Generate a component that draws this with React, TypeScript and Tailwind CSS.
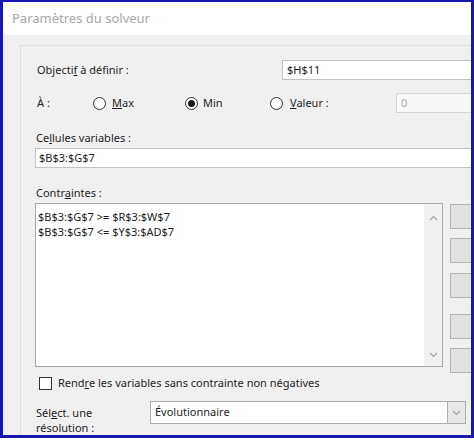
import React from "react";

const font = { fontFamily: '"Noto Sans", "Open Sans", sans-serif' };

function Radio({ checked }: { checked?: boolean }) {
  return (
    <span className="w-[13px] h-[13px] rounded-full border border-[#333] bg-white flex items-center justify-center shrink-0">
      {checked && <span className="w-[7px] h-[7px] rounded-full bg-[#1a1a1a]" />}
    </span>
  );
}

function Chevron({ up }: { up?: boolean }) {
  return (
    <svg width="9" height="6" viewBox="0 0 9 6" className="block">
      <path d={up ? "M1 5 L4.5 1.5 L8 5" : "M1 1 L4.5 4.5 L8 1"} fill="none" stroke="#a0a0a0" strokeWidth="1.1" />
    </svg>
  );
}

export default function App() {
  return (
    <div className="w-[474px] h-[441px] bg-white overflow-hidden text-[11px] text-[#1e1e1e]" style={font}>
      <div className="h-[438px] border-[#1818b0] border-l-[3px] border-t-[2px] border-r-[3px] border-b-[3px] flex flex-col overflow-hidden">
        <div className="h-[33px] shrink-0 bg-white flex items-center pl-[9px] text-[13px] text-[#a8a8a8]">
          Paramètres du solveur
        </div>
        <div className="flex-1 bg-[#f1eff0] pl-[17px] pt-[10px] overflow-hidden">
          <div className="h-full w-[480px] bg-[#f0f0f0] border-l border-t border-[#dedede] flex flex-col">
            {/* Objectif */}
            <div className="flex items-center h-[20px] mt-[14px]">
              <div className="w-[261px] pl-[16px] shrink-0">
                Objecti<span className="underline">f</span> à définir :
              </div>
              <div className="w-[220px] h-[20px] bg-white border border-[#c2c2c2] flex items-center pl-[4px] shrink-0">
                $H$11
              </div>
            </div>
            {/* À */}
            <div className="flex items-center h-[20px] mt-[13px]">
              <div className="w-[72px] pl-[16px] shrink-0">À :</div>
              <div className="w-[92px] flex items-center gap-[6px] shrink-0">
                <Radio />
                <span>
                  <span className="underline">M</span>ax
                </span>
              </div>
              <div className="w-[85px] flex items-center gap-[5px] shrink-0">
                <Radio checked />
                <span>Min</span>
              </div>
              <div className="w-[126px] flex items-center gap-[7px] shrink-0">
                <Radio />
                <span>
                  <span className="underline">V</span>aleur :
                </span>
              </div>
              <div className="w-[120px] h-[20px] bg-[#f8f8f8] border border-[#d4d4d4] flex items-center pl-[4px] text-[#a8a8a8] shrink-0">
                0
              </div>
            </div>
            {/* Cellules variables */}
            <div className="h-[16px] leading-[16px] mt-[17px] pl-[15px]">
              Ce<span className="underline">l</span>lules variables :
            </div>
            <div className="h-[21px] mt-[2px] ml-[14px] w-[460px] bg-white border border-[#c2c2c2] flex items-center pl-[3px]">
              $B$3:$G$7
            </div>
            {/* Contraintes */}
            <div className="h-[16px] leading-[16px] mt-[17px] pl-[15px]">
              Contr<span className="underline">a</span>intes :
            </div>
            <div className="flex items-start h-[164px] mt-[2px] ml-[14px]">
              <div className="w-[408px] h-[164px] bg-white border border-[#a8a8a8] flex shrink-0">
                <div className="flex-1 pl-[2px] pt-[5px] leading-[15px]">
                  <div>$B$3:$G$7 &gt;= $R$3:$W$7</div>
                  <div>$B$3:$G$7 &lt;= $Y$3:$AD$7</div>
                </div>
                <div className="w-[18px] bg-[#f0f0f0] flex flex-col justify-between items-center pt-[11px] pb-[8px]">
                  <Chevron up />
                  <Chevron />
                </div>
              </div>
              <div className="flex flex-col ml-[7px] shrink-0">
                <div className="w-[40px] h-[25px] mt-[1px] bg-[#e1e1e1] border border-[#b4b4b4]" />
                <div className="w-[40px] h-[25px] mt-[9px] bg-[#e1e1e1] border border-[#b4b4b4]" />
                <div className="w-[40px] h-[25px] mt-[10px] bg-[#e1e1e1] border border-[#b4b4b4]" />
                <div className="w-[40px] h-[25px] mt-[16px] bg-[#e1e1e1] border border-[#b4b4b4]" />
                <div className="w-[40px] h-[25px] mt-[9px] bg-[#e1e1e1] border border-[#b4b4b4]" />
              </div>
            </div>
            {/* Checkbox */}
            <div className="flex items-center mt-[10px] pl-[18px] h-[13px]">
              <span className="w-[13px] h-[13px] border border-[#333] bg-white shrink-0" />
              <span className="ml-[6px]">
                Rend<span className="underline">r</span>e les variables sans contrainte non négatives
              </span>
            </div>
            {/* Select */}
            <div className="flex items-start mt-[11px]">
              <div className="w-[129px] pl-[15px] pt-[4px] leading-[15px] shrink-0">
                <div>
                  Sél<span className="underline">e</span>ct. une
                </div>
                <div>résolution :</div>
              </div>
              <div className="w-[316px] h-[23px] bg-white border border-[#adadad] flex items-center shrink-0">
                <span className="flex-1 pl-[4px]">Évolutionnaire</span>
                <span className="w-[18px] h-[21px] bg-[#e8e8e8] border-l border-[#adadad] flex items-center justify-center">
                  <Chevron />
                </span>
              </div>
            </div>
          </div>
        </div>
      </div>
    </div>
  );
}
